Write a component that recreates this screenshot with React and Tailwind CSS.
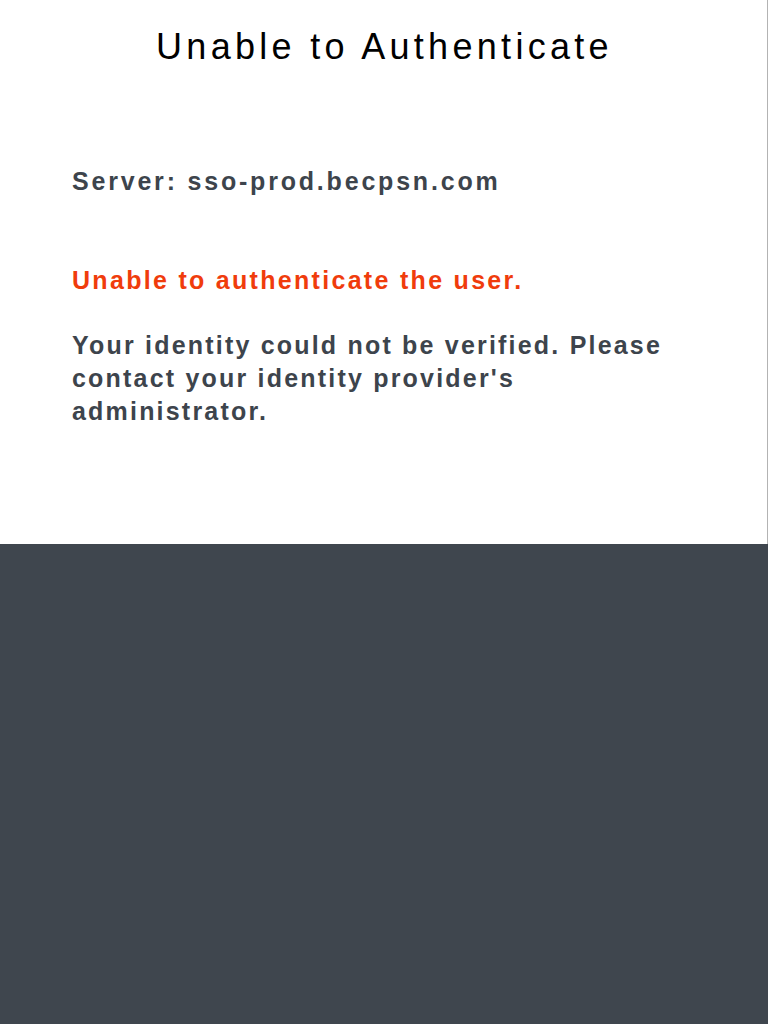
export default function App() {
  return (
    <div className="min-h-screen w-full bg-[#3f464e] flex flex-col" style={{ fontFamily: '"Liberation Sans", Arial, sans-serif' }}>
      <div className="h-[544px] bg-white border-r border-[#b3b3b3] flex flex-col">
        <h1 className="text-center text-[36px] leading-none text-black pt-[29px] tracking-[4.3px] pl-[2px]">Unable to Authenticate</h1>
        <div className="px-[72px] pt-[100px] text-[25px] text-[#3d444c] font-semibold tracking-[2.2px]">
          <p className="leading-[33px] tracking-[2.8px]">Server: sso-prod.becpsn.com</p>
          <p className="leading-[33px] mt-[66px] text-[#f03c0c] tracking-[2.3px]">Unable to authenticate the user.</p>
          <p className="leading-[33px] mt-[32px]">Your identity could not be verified. Please contact your identity provider's administrator.</p>
        </div>
      </div>
    </div>
  );
}
